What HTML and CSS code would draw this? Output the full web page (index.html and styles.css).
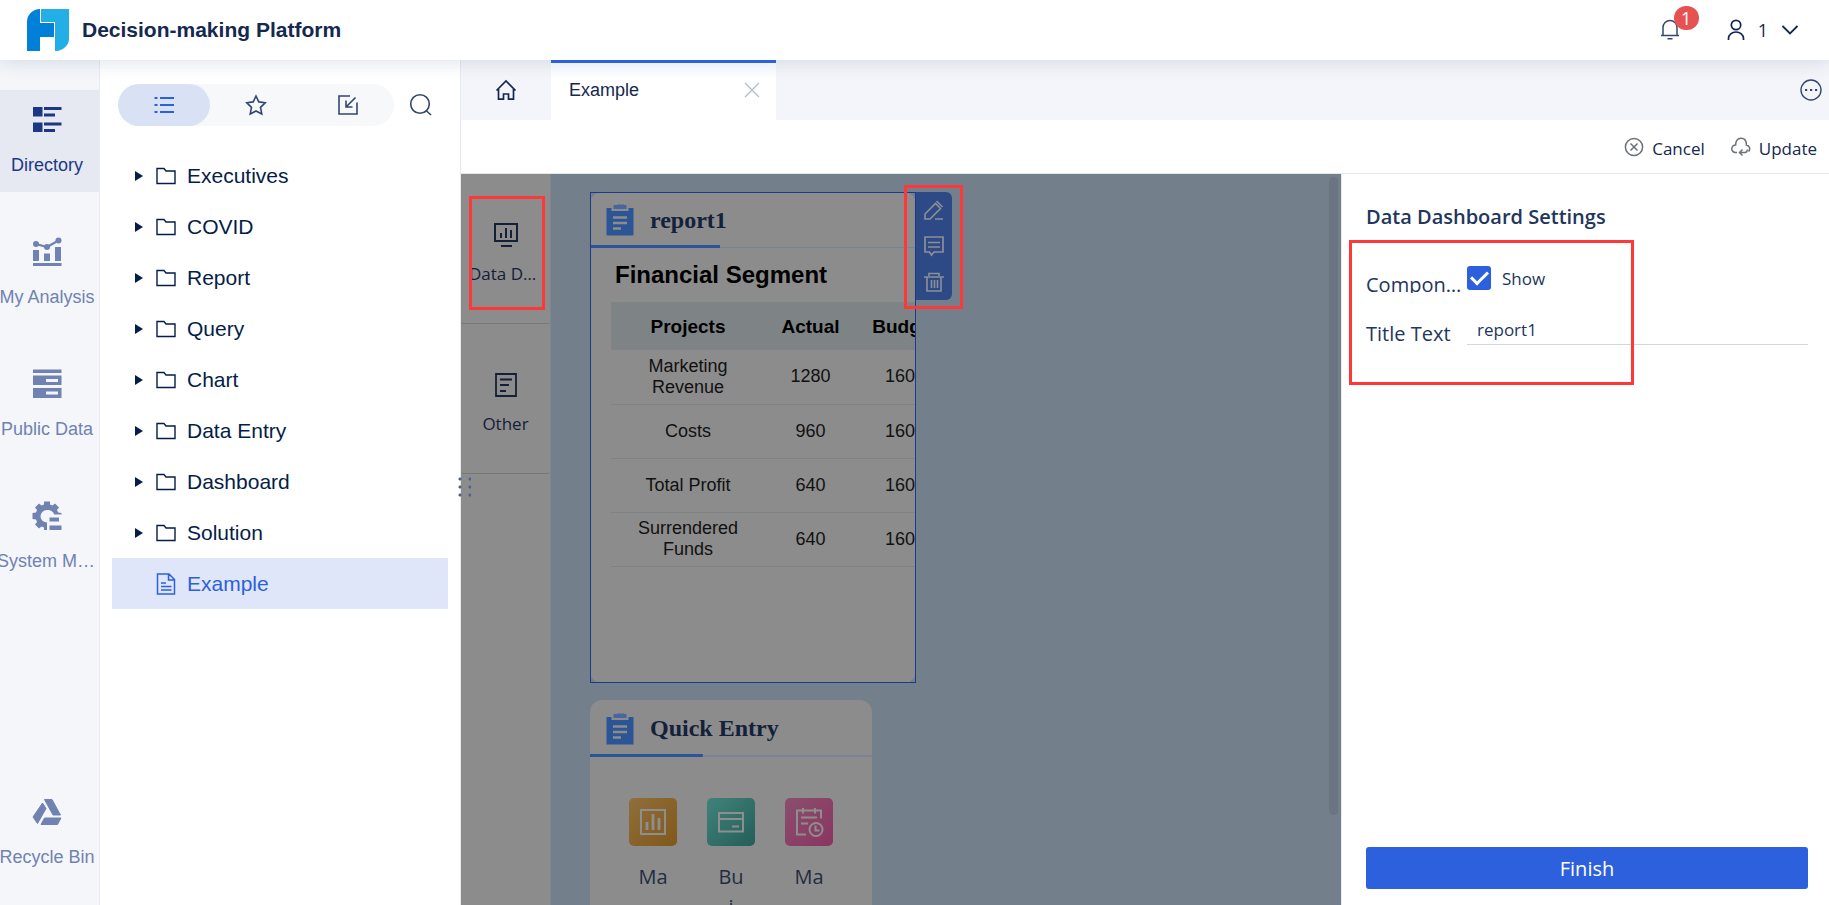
FILE: index.html
```html
<!DOCTYPE html>
<html lang="en">
<head>
    <meta charset="UTF-8">
    <meta name="viewport" content="width=device-width, initial-scale=1.0">
    <title>Decision-making Platform</title>
    <link rel="stylesheet" href="styles.css">
</head>
<body>
    <!-- Shared icons -->
    <svg class="defs" width="0" height="0" aria-hidden="true">
        <symbol id="folder" viewBox="0 0 20 18">
            <path d="M1 1.5h7l2 2.5h9v12.500H1z" fill="none" stroke="currentColor" stroke-width="1.400"/>
        </symbol>
        <symbol id="clipboard" viewBox="0 0 28 32">
            <path d="M.5 4h5v3h17V4h5v27.500H.5z" fill="#2c5596"/>
            <path d="M8 1h3V.5h7V1h2.500v4H7.500V1z" fill="#48659c"/>
            <path d="M7 13.500h14M7 19h14M7 24.500h8" stroke="#8c8c8c" stroke-width="2.500"/>
        </symbol>
    </svg>

    <div class="app">
        <header class="header">
            <svg class="logo" width="44" height="44" viewBox="0 0 44 44">
                <path d="M1 43V14A13 13 0 0 1 14 1v14h14v14H14v14z" fill="#0080d8"/>
                <path d="M15 1h28v28a13 13 0 0 1-13 14H29V14H15z" fill="#23aee5"/>
            </svg>
            <h1 class="title">Decision-making Platform</h1>
            <div class="user-area">
                <button class="icon-btn bell" aria-label="Notifications">
                    <svg width="20" height="22" viewBox="0 0 20 22" fill="none" stroke="currentColor" stroke-width="1.500">
                        <path d="M1 16.500h18M3 16.500V8.500a7 7 0 0 1 14 0v8M7.500 19.800h5"/>
                    </svg>
                    <span class="badge">1</span>
                </button>
                <button class="user">
                    <svg width="18" height="22" viewBox="0 0 18 22" fill="none" stroke="currentColor" stroke-width="1.700">
                        <circle cx="9" cy="6" r="4.700"/>
                        <path d="M1.500 21v-1.500a7.500 6.500 0 0 1 15 0V21"/>
                    </svg>
                    <span>1</span>
                    <svg width="18" height="12" viewBox="0 0 18 12" fill="none" stroke="currentColor" stroke-width="1.800">
                        <path d="M1.500 2L9 9.500 16.500 2"/>
                    </svg>
                </button>
            </div>
        </header>

        <div class="body">
            <nav class="side-nav">
                <a href="#" class="nav-item active">
                    <svg width="30" height="30" viewBox="0 0 30 30" fill="currentColor">
                        <path d="M1 2h9.500v9.500H1zM12 2h17.500v3H12zM12 8.500h11v3H12zM1 17.500h9.500V27H1zM12 17.500h17.500v3H12zM12 24h11v3H12z"/>
                    </svg>
                    <span class="nav-label">Directory</span>
                </a>
                <a href="#" class="nav-item">
                    <svg width="30" height="30" viewBox="0 0 30 30" fill="currentColor">
                        <path d="M1 13h6v11H1zM12 16.500h6V24h-6zM23 10h6v14h-6zM1 26h28.500v3H1z"/>
                        <circle cx="4" cy="7" r="3"/><circle cx="15" cy="10" r="3"/><circle cx="26.500" cy="3.500" r="3"/>
                        <path d="M4 7l11 3 11.500-6.500" fill="none" stroke="currentColor" stroke-width="2.200"/>
                    </svg>
                    <span class="nav-label">My Analysis</span>
                </a>
                <a href="#" class="nav-item">
                    <svg width="30" height="30" viewBox="0 0 30 30" fill="currentColor" fill-rule="evenodd">
                        <path d="M1 .5h28.500V4H1zM1 6.500h28.500V16H1zM14 10v3h12v-3zM1 19h28.500v10H1zM14 22.500v3h12v-3z"/>
                    </svg>
                    <span class="nav-label">Public Data</span>
                </a>
                <a href="#" class="nav-item">
                    <svg width="30" height="30" viewBox="0 0 30 30" fill="currentColor">
                        <path d="M12 .5h6v3l2.500 1L23 2.500l4 4L25 9l1.200 2.500 3.300.5v1.500h-7.200A7.200 7.200 0 0 0 8.500 15c0 3.500 2.500 6 6.500 6.500v7.500h-3v-2.500L9.500 25.500 7 27.500l-4-4 2-2.500-1-2.500L.5 18v-6L4 11.500 5 9 3 6.500l4-4 2.500 2 2.500-1z"/>
                        <path d="M17.500 16.500H27v4h-9.500zM17.500 24.500h12V29h-12z"/>
                    </svg>
                    <span class="nav-label">System Management</span>
                </a>
                <a href="#" class="nav-item bottom">
                    <svg width="30" height="30" viewBox="0 0 30 30" fill="currentColor" stroke="currentColor" stroke-linejoin="round">
                        <path d="M12.500 2.500H20l8.500 15.500h-7.500zM10.500 6l3.500 5.500L5.500 26.500 1 20zM12.500 21h16.500L25.500 27.500H9z"/>
                    </svg>
                    <span class="nav-label">Recycle Bin</span>
                </a>
            </nav>

            <aside class="directory">
                <div class="dir-tools">
                    <div class="dir-tabs">
                        <button class="dir-tab active" aria-label="List">
                            <svg width="22" height="20" viewBox="0 0 22 20" fill="none" stroke="currentColor" stroke-width="1.800">
                                <path d="M7 3h14M7 10h14M7 17h14M1.500 3h3M1.500 10h3M1.500 17h3"/>
                            </svg>
                        </button>
                        <button class="dir-tab" aria-label="Favorites">
                            <svg width="22" height="22" viewBox="0 0 22 22" fill="none" stroke="currentColor" stroke-width="1.600">
                                <path d="M11 2l2.800 5.900 6.400.9-4.700 4.500 1.300 6.700L11 17l-5.800 3 1.300-6.700L1.800 8.800l6.400-.9z"/>
                            </svg>
                        </button>
                        <button class="dir-tab" aria-label="Recent">
                            <svg width="22" height="22" viewBox="0 0 22 22" fill="none" stroke="currentColor" stroke-width="1.600">
                                <path d="M13 2H2v18h18V8.500M18.500 3.500L9 13M9 6.500V13h6.500"/>
                            </svg>
                        </button>
                    </div>
                    <button class="icon-btn" aria-label="Search">
                        <svg width="24" height="24" viewBox="0 0 24 24" fill="none" stroke="currentColor" stroke-width="1.600">
                            <circle cx="11" cy="11" r="9.300"/>
                            <path d="M17 17.500l5 4.500"/>
                        </svg>
                    </button>
                </div>
                <ul class="tree">
                    <li><a href="#"><i class="arrow"></i><svg class="tree-icon"><use href="#folder"/></svg>Executives</a></li>
                    <li><a href="#"><i class="arrow"></i><svg class="tree-icon"><use href="#folder"/></svg>COVID</a></li>
                    <li><a href="#"><i class="arrow"></i><svg class="tree-icon"><use href="#folder"/></svg>Report</a></li>
                    <li><a href="#"><i class="arrow"></i><svg class="tree-icon"><use href="#folder"/></svg>Query</a></li>
                    <li><a href="#"><i class="arrow"></i><svg class="tree-icon"><use href="#folder"/></svg>Chart</a></li>
                    <li><a href="#"><i class="arrow"></i><svg class="tree-icon"><use href="#folder"/></svg>Data Entry</a></li>
                    <li><a href="#"><i class="arrow"></i><svg class="tree-icon"><use href="#folder"/></svg>Dashboard</a></li>
                    <li><a href="#"><i class="arrow"></i><svg class="tree-icon"><use href="#folder"/></svg>Solution</a></li>
                    <li><a href="#" class="selected"><i class="arrow none"></i><svg class="tree-icon file" viewBox="0 0 20 22" fill="none" stroke="currentColor" stroke-width="1.500"><path d="M1.500 1h11.500l5.500 5.500V21h-17zM12.500 1v6h6M5 10h5M5 13.500h10.500M5 17h10.500"/></svg>Example</a></li>
                </ul>
                <span class="drag-dots"></span>
            </aside>

            <main class="workspace">
                <div class="tabs">
                    <a href="#" class="tab-home" aria-label="Home">
                        <svg width="22" height="22" viewBox="0 0 22 22" fill="none" stroke="currentColor" stroke-width="1.700">
                            <path d="M1.500 11.500L11 2l9.500 9.500M3.500 10v10.200h5V15h5v5.200h5V10"/>
                        </svg>
                    </a>
                    <div class="tab">
                        <span>Example</span>
                        <button class="close" aria-label="Close tab">
                            <svg width="16" height="16" viewBox="0 0 16 16" stroke="currentColor" stroke-width="1.300">
                                <path d="M1 1l14 14M15 1L1 15"/>
                            </svg>
                        </button>
                    </div>
                    <button class="icon-btn more" aria-label="More">
                        <svg width="22" height="22" viewBox="0 0 22 22" fill="none" stroke="currentColor" stroke-width="1.400">
                            <circle cx="11" cy="11" r="10"/>
                            <path d="M5 11h2.200M10 11h2.200M15 11h2.200" stroke-width="2"/>
                        </svg>
                    </button>
                </div>

                <div class="actions">
                    <button class="action">
                        <svg width="20" height="20" viewBox="0 0 20 20" fill="none" stroke="currentColor" stroke-width="1.500">
                            <circle cx="10" cy="10" r="8.600"/>
                            <path d="M6.500 6.500l7 7M13.500 6.500l-7 7"/>
                        </svg>
                        <span>Cancel</span>
                    </button>
                    <button class="action">
                        <svg width="20" height="20" viewBox="0 0 20 20" fill="none" stroke="currentColor" stroke-width="1.500">
                            <path d="M6 15.500H4.500A3.700 3.700 0 0 1 4.600 8C4.600 4 6.500 1.300 10 1.300S15.400 4 15.400 8a3.800 3.800 0 0 1 2.100 6.500M8.500 15.500h5.500a2.200 2.200 0 0 0 2-3M11.500 12.500l-3 3 3 3"/>
                        </svg>
                        <span>Update</span>
                    </button>
                </div>

                <div class="editor">
                    <div class="components">
                        <button class="component">
                            <svg width="26" height="26" viewBox="0 0 26 26" fill="none" stroke="currentColor" stroke-width="2">
                                <path d="M2 2h22v17H2zM8 16v-5M13 16V6M18 16V8M8 24h11"/>
                            </svg>
                            <span>Data Dashboard</span>
                        </button>
                        <button class="component">
                            <svg width="26" height="26" viewBox="0 0 26 26" fill="none" stroke="currentColor" stroke-width="1.800">
                                <path d="M3 2h20v22H3zM7 7.500h12M7 13h9M7 19h6"/>
                            </svg>
                            <span>Other</span>
                        </button>
                        <div class="mark mark-component"></div>
                    </div>

                    <div class="canvas">
                        <section class="widget selected-widget">
                            <div class="card">
                                <h2 class="card-head"><svg width="28" height="32"><use href="#clipboard"/></svg>report1</h2>
                                <div class="report">
                                    <h3>Financial Segment</h3>
                                    <table>
                                        <thead>
                                            <tr><th class="project">Projects</th><th class="actual">Actual</th><th class="budget">Budget</th></tr>
                                        </thead>
                                        <tbody>
                                            <tr><td>Marketing Revenue</td><td>1280</td><td>1600</td></tr>
                                            <tr><td>Costs</td><td>960</td><td>1600</td></tr>
                                            <tr><td>Total Profit</td><td>640</td><td>1600</td></tr>
                                            <tr><td>Surrendered Funds</td><td>640</td><td>1600</td></tr>
                                        </tbody>
                                    </table>
                                </div>
                            </div>
                            <div class="widget-tools">
                                <button aria-label="Edit">
                                    <svg width="22" height="22" viewBox="0 0 22 22" fill="none" stroke="currentColor" stroke-width="1.600">
                                        <path d="M2 20v-5L12.500 4.500l5 5L7 20zM13.500 2l6 6M12 20h8"/>
                                    </svg>
                                </button>
                                <button aria-label="Comment">
                                    <svg width="22" height="22" viewBox="0 0 22 22" fill="none" stroke="currentColor" stroke-width="1.700">
                                        <path d="M2 2h18v15h-9l-2.500 3-2-3H2zM5 7.500h12M5 12h12"/>
                                    </svg>
                                </button>
                                <button aria-label="Delete">
                                    <svg width="22" height="22" viewBox="0 0 22 22" fill="none" stroke="currentColor" stroke-width="1.600">
                                        <path d="M1 6h20M6 5V2.500h10V5M4 6v14h14V6M8.500 9v8M11.500 9v8M14.500 9v8"/>
                                    </svg>
                                </button>
                            </div>
                            <div class="mark mark-tools"></div>
                        </section>

                        <section class="widget quick-widget">
                            <h2 class="card-head"><svg width="28" height="32"><use href="#clipboard"/></svg>Quick Entry</h2>
                            <div class="entries">
                                <a href="#" class="entry">
                                    <svg class="tile orange" viewBox="0 0 48 48" fill="none" stroke="currentColor" stroke-width="2">
                                        <path d="M12 12h24v24H12z"/>
                                        <path d="M18 32v-8M24 32V16M30 32V20" stroke-width="2.800"/>
                                    </svg>
                                    <span>Ma</span>
                                </a>
                                <a href="#" class="entry">
                                    <svg class="tile teal" viewBox="0 0 48 48" fill="none" stroke="currentColor" stroke-width="2">
                                        <path d="M12 15h24v18.500H12zM12 21h24M25 28.500h7"/>
                                    </svg>
                                    <span>Bu<br>i</span>
                                </a>
                                <a href="#" class="entry">
                                    <svg class="tile pink" viewBox="0 0 48 48" fill="none" stroke="currentColor" stroke-width="2">
                                        <path d="M21 36.500h-9v-24h24v8M18 10v5.500M30 10v5.500M16 19.500h16M16 25.500h7"/>
                                        <circle cx="31" cy="31.500" r="6.500"/>
                                        <path d="M30.500 27.500v5h4"/>
                                    </svg>
                                    <span>Ma</span>
                                </a>
                            </div>
                        </section>
                        <div class="scrollbar"></div>
                    </div>

                    <form class="settings">
                        <h2>Data Dashboard Settings</h2>
                        <div class="field">
                            <label class="field-label clipped" for="show">Component</label>
                            <label class="check"><input type="checkbox" id="show" checked>Show</label>
                        </div>
                        <div class="field">
                            <label class="field-label" for="title-text">Title Text</label>
                            <input type="text" id="title-text" value="report1">
                        </div>
                        <button type="button" class="finish">Finish</button>
                        <div class="mark mark-settings"></div>
                    </form>
                </div>
            </main>
        </div>
    </div>
</body>
</html>
```

FILE: styles.css
```css
* {
    box-sizing: border-box;
}
body {
    margin: 0;
    font-family: "Liberation Sans", Arial, sans-serif;
    font-size: 18px;
    color: #142850;
}
h1, h2, h3, ul {
    margin: 0;
    padding: 0;
}
a {
    color: inherit;
    text-decoration: none;
}
button {
    padding: 0;
    border: none;
    background: none;
    color: inherit;
    font: inherit;
    cursor: pointer;
}
svg {
    display: block;
    flex: none;
}
.defs { position: absolute; }
.app {
    display: flex;
    flex-direction: column;
    height: 100vh;
    overflow: hidden;
}

/* Header */
.header {
    position: relative;
    z-index: 2;
    display: flex;
    align-items: center;
    flex: none;
    height: 60px;
    padding: 0 30px 0 26px;
    background: white;
    box-shadow: 0 2px 18px rgba(20, 40, 80, 0.14);
}
.title {
    margin-left: 12px;
    font-size: 21px;
    line-height: 24px;
}
.user-area {
    display: flex;
    align-items: center;
    gap: 47px;
    margin-left: auto;
    font-family: "Open Sans", "Noto Sans", sans-serif;
}
.icon-btn { color: #32476f; }
.bell { position: relative; }
.badge {
    position: absolute;
    left: 14px;
    bottom: 11px;
    width: 25px;
    height: 24px;
    border-radius: 12px;
    background: #e65251;
    color: white;
    line-height: 24px;
}
.user {
    display: flex;
    align-items: center;
    gap: 13px;
}

.body {
    display: flex;
    flex: 1;
    min-height: 0;
}

/* Side navigation */
.side-nav {
    display: flex;
    flex-direction: column;
    flex: none;
    gap: 30px;
    width: 100px;
    padding: 30px 0 21px;
    border-right: 1px solid #e8eaef;
    background: #f4f6fa;
}
.nav-item {
    display: flex;
    flex-direction: column;
    align-items: center;
    gap: 18px;
    height: 102px;
    padding: 15px 5px 0 0;
    overflow: hidden;
    color: #7082b2;
}
.nav-item.active {
    background: #e6e9f2;
    color: #1c3884;
}
.nav-item.bottom { margin-top: auto; }
.nav-label {
    width: 100px;
    overflow: hidden;
    line-height: 24px;
    text-align: center;
    text-overflow: ellipsis;
    white-space: nowrap;
}

/* Directory tree */
.directory {
    position: relative;
    flex: none;
    width: 361px;
    padding: 24px 12px 0;
    border-right: 1px solid #e6e9ee;
}
.dir-tools {
    display: flex;
    align-items: center;
    gap: 15px;
    padding: 0 6px;
}
.dir-tabs {
    display: flex;
    width: 276px;
    border-radius: 21px;
    background: #f7f8fa;
}
.dir-tab {
    display: flex;
    align-items: center;
    justify-content: center;
    flex: 1;
    height: 42px;
    border-radius: 21px;
    color: #32476f;
}
.dir-tab.active {
    background: #d9e1f4;
    color: #2c60dc;
}
.tree {
    margin-top: 24px;
    list-style: none;
    font-size: 21px;
    line-height: 51px;
}
.tree a {
    display: flex;
    align-items: center;
    color: #051d48;
}
.tree .selected {
    background: #e0e6fa;
    color: #2c60dc;
}
.arrow {
    margin: 0 13px 0 23px;
    border: 5px solid transparent;
    border-left: 8px solid #051d48;
    border-right: none;
}
.arrow.none { border-color: transparent; }
.tree-icon {
    width: 20px;
    height: 18px;
    margin-right: 11px;
}
.tree-icon.file { height: 22px; }
.drag-dots {
    position: absolute;
    top: 417px;
    right: -11px;
    z-index: 1;
    width: 13px;
    height: 20px;
    background: radial-gradient(circle at 2px 2px, #4c6190 1px, transparent 2px) 0 0 / 10px 8px;
}

/* Tabs and actions */
.workspace {
    display: flex;
    flex-direction: column;
    flex: 1;
    min-width: 0;
}
.tabs {
    display: flex;
    flex: none;
    height: 60px;
    background: #f4f5fa;
}
.tab-home {
    display: flex;
    align-items: center;
    justify-content: center;
    width: 90px;
}
.tab {
    position: relative;
    z-index: 3;
    display: flex;
    align-items: center;
    justify-content: space-between;
    width: 225px;
    padding: 0 16px 3px 18px;
    border-top: 3px solid #2c60dc;
    background: linear-gradient(#edf1fa, white 16px);
}
.close { color: #b4bbcb; }
.more {
    margin-left: auto;
    padding: 0 7px;
}
.actions {
    display: flex;
    justify-content: flex-end;
    flex: none;
    gap: 26px;
    height: 54px;
    padding: 0 12px;
    border-bottom: 1px solid #e4e7ec;
    font-family: "Open Sans", "Noto Sans", sans-serif;
    font-size: 17px;
}
.action {
    display: flex;
    align-items: center;
    gap: 8px;
}
.action svg { color: #6b7078; }
.action span { padding-top: 3px; }

/* Editor */
.editor {
    display: flex;
    flex: 1;
    min-height: 0;
    font-family: "Open Sans", "Noto Sans", sans-serif;
}
.components {
    position: relative;
    flex: none;
    width: 90px;
    border-right: 1px solid #7f868d;
    background: #8c8c8c;
}
.component {
    display: flex;
    flex-direction: column;
    align-items: center;
    gap: 14px;
    width: 100%;
    height: 150px;
    padding: 48px 8px 0;
    border-bottom: 1px solid #777;
    border-radius: 3px;
    color: #142036;
    font-size: 17px;
}
.component span {
    max-width: 100%;
    overflow: hidden;
    line-height: 24px;
    text-overflow: ellipsis;
    white-space: nowrap;
}
.canvas {
    position: relative;
    display: flex;
    flex-direction: column;
    align-items: flex-start;
    flex: 1;
    gap: 17px;
    padding: 18px 39px 0;
    overflow: hidden;
    background: #737f8b;
}
.widget {
    position: relative;
    flex: none;
}
.selected-widget {
    width: 326px;
    height: 491px;
    outline: 1px solid #1c3a8c;
    outline-offset: -1px;
}
.card {
    height: 100%;
    overflow: hidden;
    border-radius: 12px;
    background: #8c8c8c;
}
/* blue accent over a full-width hairline */
.card-head {
    display: flex;
    align-items: center;
    gap: 16px;
    height: 56px;
    padding-left: 16px;
    background:
        linear-gradient(#2c5596, #2c5596) 0 100% / 40% 3px no-repeat,
        linear-gradient(#75839a, #75839a) 0 100% / 100% 1px no-repeat;
    color: #14213a;
    font-family: "Liberation Serif", "Times New Roman", serif;
    font-size: 24px;
}
.report {
    padding: 12px 0 0 21px;
    color: black;
    font-family: "Liberation Sans", Arial, sans-serif;
}
.report h3 {
    padding-left: 4px;
    font-size: 24px;
    line-height: 30px;
}
.report table {
    width: 343px;
    margin-top: 12px;
    border-collapse: collapse;
    table-layout: fixed;
    line-height: 21px;
    text-align: center;
}
.report th {
    height: 48px;
    padding: 0;
    background: #7e8485;
    font-size: 19px;
}
.report td {
    height: 54px;
    padding: 0 20px;
    border-bottom: 1px solid #7c8485;
    color: #111;
}
.project { width: 154px; }
.actual { width: 91px; }
.budget { width: 98px; }
.widget-tools {
    position: absolute;
    top: 0;
    left: 100%;
    display: flex;
    flex-direction: column;
    align-items: center;
    justify-content: space-around;
    width: 36px;
    height: 108px;
    border-radius: 0 6px 6px 0;
    background: #2e4a86;
    color: #8c8f96;
}
.quick-widget {
    width: 282px;
    height: 300px;
    border-radius: 12px;
    background: #8c8c8c;
}
.quick-widget .card-head {
    height: 57px;
    background:
        linear-gradient(#2c5596, #2c5596) 0 100% / 40% 3px no-repeat,
        linear-gradient(#7d8294, #7d8294) 0 100% / 100% 2px no-repeat;
}
.entries {
    display: flex;
    justify-content: center;
    gap: 30px;
    padding-top: 41px;
}
.entry {
    width: 48px;
    color: #222c40;
    font-size: 20px;
    line-height: 30px;
    text-align: center;
}
.tile {
    width: 48px;
    height: 48px;
    margin-bottom: 16px;
    border-radius: 5px;
    color: #8e8e8e;
}
.orange { background: linear-gradient(135deg, #906f3b, #80581a); }
.teal { background: linear-gradient(135deg, #40837a, #245e58); }
.pink { background: linear-gradient(135deg, #8a4f6e, #8a3560); }
.scrollbar {
    position: absolute;
    top: 3px;
    right: 3px;
    width: 9px;
    height: 638px;
    border-radius: 5px;
    background: #697582;
}

/* Settings */
.settings {
    position: relative;
    display: flex;
    flex-direction: column;
    flex: none;
    width: 488px;
    padding: 28px 21px 16px 24px;
    border-left: 1px solid #e6e9ee;
    color: #22365c;
    font-size: 17px;
}
.settings h2 {
    margin-bottom: 34px;
    font-size: 20px;
    font-weight: 600;
    line-height: 30px;
}
.field {
    display: flex;
    height: 49px;
}
.field-label {
    flex: none;
    width: 101px;
    padding-top: 4px;
    font-size: 20px;
    line-height: 30px;
}
.clipped {
    height: 27px;
    padding-right: 5px;
    overflow: hidden;
    text-overflow: ellipsis;
    white-space: nowrap;
}
.check {
    display: flex;
    align-items: center;
    gap: 11px;
    height: 24px;
}
.check input {
    display: grid;
    place-content: center;
    width: 24px;
    height: 24px;
    margin: 0;
    border-radius: 3px;
    background: #2c60dc;
    appearance: none;
}
.check input::before {
    content: "";
    width: 14px;
    height: 7px;
    margin-bottom: 4px;
    border: solid white;
    border-width: 0 0 3px 3px;
    transform: rotate(-45deg);
}
.field input[type="text"] {
    flex: 1;
    min-width: 0;
    height: 30px;
    padding: 0 10px;
    border: none;
    border-bottom: 1px solid #d4d6da;
    color: inherit;
    font: inherit;
}
.finish {
    height: 42px;
    margin-top: auto;
    border-radius: 3px;
    background: #2c60dc;
    color: white;
    font-size: 20px;
}

/* Highlight frames */
.mark {
    position: absolute;
    border: 3px solid #fe3838;
    pointer-events: none;
}
.mark-component {
    top: 22px;
    left: 8px;
    width: 76px;
    height: 114px;
}
.mark-tools {
    top: -7px;
    left: 314px;
    width: 59px;
    height: 124px;
}
.mark-settings {
    top: 66px;
    left: 7px;
    width: 285px;
    height: 145px;
}
```
